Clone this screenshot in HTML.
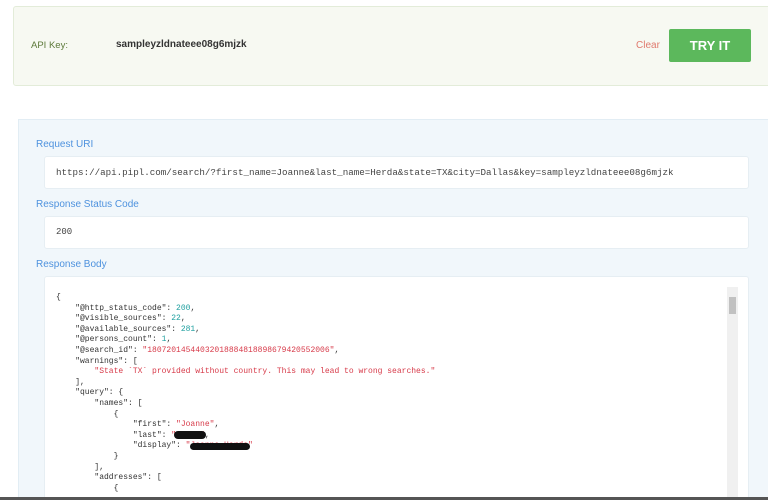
<!DOCTYPE html>
<html style="overflow:hidden;height:500px"><head><style>
body{margin:0;width:768px;height:500px;overflow:hidden;background:#fff;font-family:"Liberation Sans",sans-serif;position:relative}
.top{position:absolute;left:13px;top:6px;width:770px;height:78px;background:#f7f9f2;border:1px solid #e3ecd9;border-radius:3px}
.lbl{position:absolute;font-size:9.5px;color:#5d7a3a;left:31px;top:40px}
.key{position:absolute;font-size:10px;font-weight:bold;color:#333;left:116px;top:39px}
.clear{position:absolute;font-size:10px;color:#e07a6e;left:636px;top:40px}
.btn{position:absolute;left:669px;top:29px;width:82px;height:33px;background:#5cb85c;border-radius:2px;color:#fff;font-weight:bold;font-size:13px;text-align:center;line-height:33px}
.blue{position:absolute;left:18px;top:119px;width:760px;height:381px;background:#f1f7fb;border:1px solid #e2edf4;border-bottom:none}
.h{position:absolute;left:36px;font-size:10px;color:#4e92de}
.box{position:absolute;left:44px;width:705px;background:#fff;border:1px solid #e6eef3;border-radius:3px;box-sizing:border-box}
.mono{font-family:"Liberation Mono",monospace;color:#444}
pre{position:absolute;left:56px;top:293px;margin:0;font-family:"Liberation Mono",monospace;font-size:8px;line-height:10.6px;color:#333}
.s{color:#d73a49}.n{color:#20a0a0}
.sb{position:absolute;left:727px;top:287px;width:11px;height:210px;background:#f0f0f0}
.th{position:absolute;left:729px;top:297px;width:7px;height:17px;background:#c1c1c1}
.red{position:absolute;background:#111;border-radius:4px}
</style></head><body>
<div class="top"></div>
<div class="lbl">API Key:</div>
<div class="key">sampleyzldnateee08g6mjzk</div>
<div class="clear">Clear</div>
<div class="btn">TRY IT</div>
<div class="blue"></div>
<div class="h" style="top:139px">Request URI</div>
<div class="box" style="top:156px;height:33px"><span class="mono" style="position:absolute;left:11px;top:10px;font-size:9.2px">https://api.pipl.com/search/?first_name=Joanne&amp;last_name=Herda&amp;state=TX&amp;city=Dallas&amp;key=sampleyzldnateee08g6mjzk</span></div>
<div class="h" style="top:199px">Response Status Code</div>
<div class="box" style="top:216px;height:33px"><span class="mono" style="position:absolute;left:11px;top:10px;font-size:9px">200</span></div>
<div class="h" style="top:259px">Response Body</div>
<div class="box" style="top:276px;height:224px;border-bottom:none"></div>
<pre>{
    "@http_status_code": <span class="n">200</span>,
    "@visible_sources": <span class="n">22</span>,
    "@available_sources": <span class="n">281</span>,
    "@persons_count": <span class="n">1</span>,
    "@search_id": <span class="s">"18072014544032018884818898679420552006"</span>,
    "warnings": [
        <span class="s">"State `TX` provided without country. This may lead to wrong searches."</span>
    ],
    "query": {
        "names": [
            {
                "first": <span class="s">"Joanne"</span>,
                "last": <span class="s">"Herda"</span>,
                "display": <span class="s">"Joanne Herda"</span>
            }
        ],
        "addresses": [
            {</pre>
<div class="red" style="left:174px;top:431px;width:32px;height:8px"></div>
<div class="red" style="left:190px;top:443px;width:60px;height:7px"></div>
<div class="sb"></div><div class="th"></div>
<div style="position:absolute;left:0;top:497px;width:768px;height:3px;background:#555"></div>
</body></html>
